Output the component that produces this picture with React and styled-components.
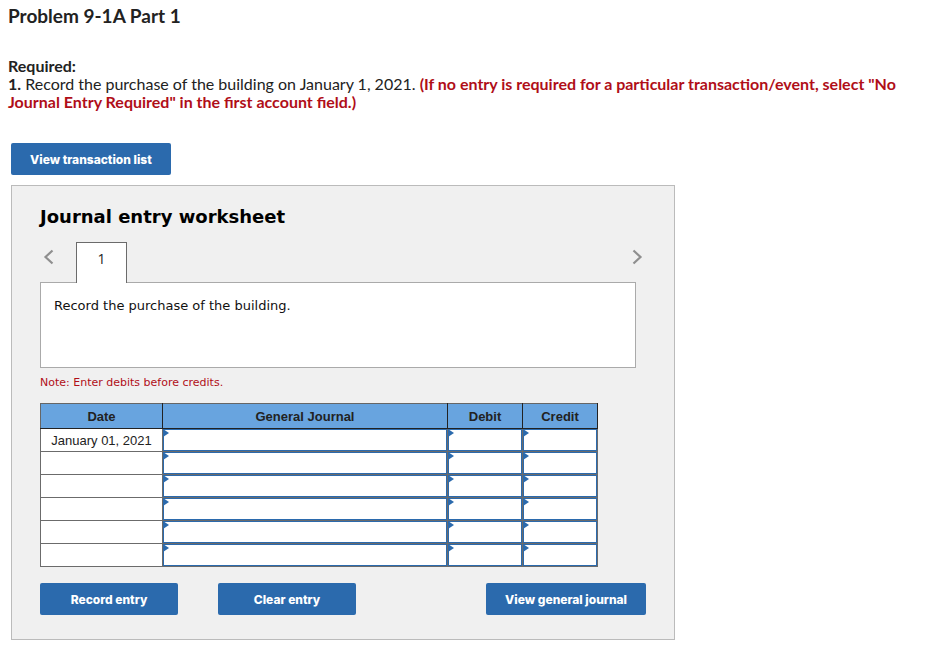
import React, { useState } from 'react';
import styled, { createGlobalStyle } from 'styled-components';

const GlobalStyle = createGlobalStyle`
  * {
    box-sizing: border-box;
  }

  body {
    margin: 0;
    background: #fff;
    color: #222;
    font-family: Lato, sans-serif;
  }
`;

const Page = styled.main`
  padding: 5px 8px 12px;
`;

const Title = styled.h1`
  margin: 0 0 30px;
  font-size: 19px;
  line-height: 22px;
`;

const Instructions = styled.p`
  margin: 0;
  font-size: 16px;
  line-height: 18px;
`;

const Warning = styled.strong`
  color: #b00e18;
`;

const Worksheet = styled.div`
  max-width: 670px;
  margin-top: 32px;
  padding: 0 3px;
`;

const Button = styled.button`
  min-width: 138px;
  height: 32px;
  padding: 0 19px;
  border: 0;
  border-radius: 2px;
  background: #2b6aad;
  color: #fff;
  font-family: Inter, sans-serif;
  font-size: 12px;
  font-weight: 800;
  cursor: pointer;
`;

const Panel = styled.section`
  margin-top: 10px;
  padding: 20px 28px 24px;
  border: 1px solid #bbb;
  background: #f0f0f0;
`;

const PanelTitle = styled.h2`
  margin: 0;
  color: #000;
  font-family: 'DejaVu Sans', sans-serif;
  font-size: 18px;
  line-height: 22px;
`;

const Tabs = styled.div`
  display: flex;
  align-items: flex-start;
  margin-top: 14px;
`;

const Arrow = styled.button`
  display: flex;
  width: 18px;
  height: 30px;
  padding: 0;
  align-items: center;
  justify-content: center;
  border: 0;
  background: none;
  color: #8f8f8f;
  cursor: pointer;
`;

const Tab = styled.button`
  position: relative;
  width: 51px;
  height: 41px;
  margin: 0 auto -1px 18px;
  padding: 0 0 10px;
  border: 1px solid #6b6b6b;
  border-bottom: 0;
  background: #fff;
  color: #222;
  font-family: 'Open Sans', sans-serif;
  font-size: 14px;
`;

const Description = styled.div`
  min-height: 86px;
  margin-right: 10px;
  padding: 14px 13px;
  border: 1px solid #aaa;
  background: #fff;
  color: #111;
  font-family: 'DejaVu Sans', sans-serif;
  font-size: 13px;
  line-height: 18px;
`;

const Note = styled.p`
  margin: 8px 0 13px;
  color: #b00e18;
  font-family: 'DejaVu Sans', sans-serif;
  font-size: 11px;
  line-height: 14px;
`;

const Table = styled.table`
  width: calc(100% - 48px);
  table-layout: fixed;
  border-collapse: collapse;
  color: #222;
  font-family: 'Liberation Sans', sans-serif;
  font-size: 13px;
`;

const HeadCell = styled.th`
  width: ${({ $width }) => $width || 'auto'};
  height: 25px;
  padding: 0;
  border: 1px solid #222;
  border-top-color: #666;
  background: #68a4df;

  &:first-child {
    border-left-color: #666;
  }
`;

const Cell = styled.td`
  position: relative;
  height: 23px;
  padding: 0;
  border: 1px solid #6b6b6b;
  background: #fff;
  text-align: center;
`;

const Marker = styled.svg`
  position: absolute;
  top: 0;
  left: 0;
  color: #2b6aad;
  pointer-events: none;
`;

const Field = styled.input`
  display: block;
  width: 100%;
  height: 22px;
  padding: 0 8px;
  border: 1px solid #2b6aad;
  border-radius: 0;
  background: #fff;
  font: inherit;
  text-align: ${({ $numeric }) => ($numeric ? 'right' : 'left')};
`;

const Actions = styled.div`
  display: flex;
  gap: 40px;
  margin-top: 16px;

  > :last-child {
    margin-left: auto;
  }
`;

const columns = [
  { key: 'journal', label: 'General Journal' },
  { key: 'debit', label: 'Debit', width: '75px', numeric: true },
  { key: 'credit', label: 'Credit', width: '75px', numeric: true },
];

const emptyRows = () =>
  ['January 01, 2021', '', '', '', '', ''].map(date => ({ date, journal: '', debit: '', credit: '' }));

const Chevron = ({ points }) => (
  <svg width="12" height="16" viewBox="0 0 12 16" fill="none" stroke="currentColor" strokeWidth="2.2" aria-hidden="true">
    <polyline points={points} />
  </svg>
);

const JournalTable = ({ rows, onChange }) => (
  <Table>
    <thead>
      <tr>
        <HeadCell $width="122px">Date</HeadCell>
        {columns.map(column => (
          <HeadCell key={column.key} $width={column.width}>{column.label}</HeadCell>
        ))}
      </tr>
    </thead>
    <tbody>
      {rows.map((row, index) => (
        <tr key={index}>
          <Cell>{row.date}</Cell>
          {columns.map(column => (
            <Cell key={column.key}>
              <Field
                aria-label={`${column.label} ${index + 1}`}
                $numeric={column.numeric}
                value={row[column.key]}
                onChange={e => onChange(index, column.key, e.target.value)}
              />
              <Marker width="6" height="8" viewBox="0 0 6 8" aria-hidden="true">
                <path d="M0 0L6 4L0 8Z" fill="currentColor" />
              </Marker>
            </Cell>
          ))}
        </tr>
      ))}
    </tbody>
  </Table>
);

const App = () => {
  const [rows, setRows] = useState(emptyRows);

  const updateRow = (index, key, value) => {
    setRows(rows.map((row, i) => (i === index ? { ...row, [key]: value } : row)));
  };

  return (
    <Page>
      <GlobalStyle />
      <Title>Problem 9-1A Part 1</Title>
      <Instructions><strong>Required:</strong></Instructions>
      <Instructions>
        <strong>1.</strong> Record the purchase of the building on January 1, 2021.{' '}
        <Warning>
          (If no entry is required for a particular transaction/event, select "No Journal Entry
          Required" in the first account field.)
        </Warning>
      </Instructions>

      <Worksheet>
        <Button type="button">View transaction list</Button>
        <Panel>
          <PanelTitle>Journal entry worksheet</PanelTitle>
          <Tabs>
            <Arrow type="button" aria-label="Previous">
              <Chevron points="9.5,1.5 2.5,8 9.5,14.5" />
            </Arrow>
            <Tab type="button">1</Tab>
            <Arrow type="button" aria-label="Next">
              <Chevron points="2.5,1.5 9.5,8 2.5,14.5" />
            </Arrow>
          </Tabs>
          <Description>Record the purchase of the building.</Description>
          <Note>Note: Enter debits before credits.</Note>
          <JournalTable rows={rows} onChange={updateRow} />
          <Actions>
            <Button type="button">Record entry</Button>
            <Button type="button" onClick={() => setRows(emptyRows())}>Clear entry</Button>
            <Button type="button">View general journal</Button>
          </Actions>
        </Panel>
      </Worksheet>
    </Page>
  );
};

export default App;
